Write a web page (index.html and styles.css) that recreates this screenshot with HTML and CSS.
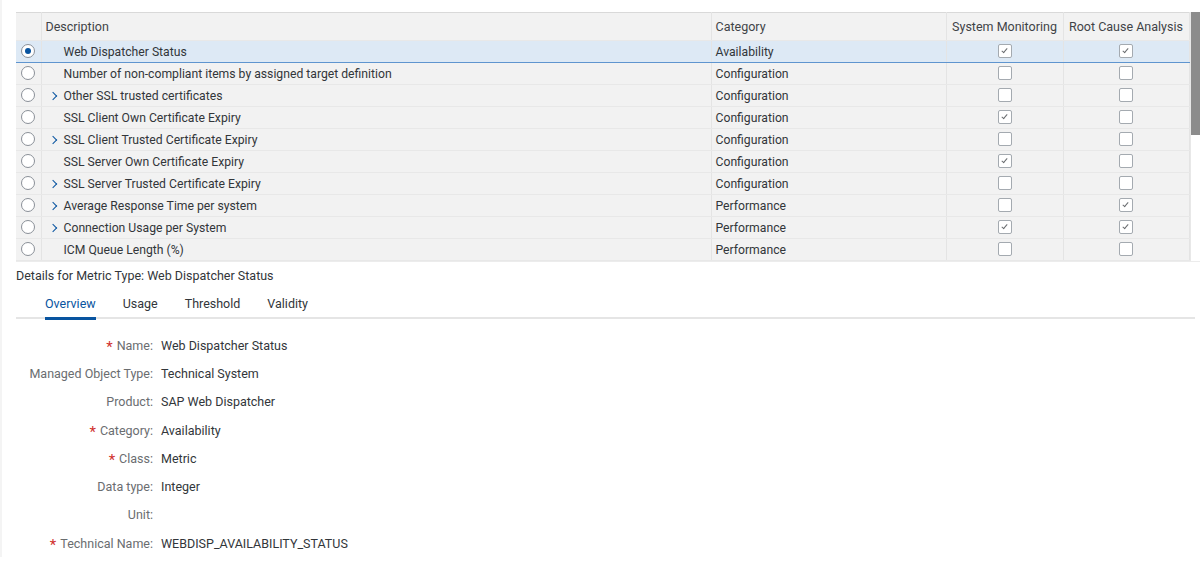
FILE: index.html
```html
<!DOCTYPE html>
<html lang="en">
<head>
  <meta charset="UTF-8">
  <title>Metric Types</title>
  <link rel="stylesheet" href="styles.css">
</head>
<body>
  <div class="grid-wrap">
    <table class="metrics">
      <colgroup>
        <col class="c-sel"><col class="c-desc"><col class="c-cat"><col class="c-sm"><col class="c-rca">
      </colgroup>
      <thead>
        <tr>
          <th></th>
          <th>Description</th>
          <th>Category</th>
          <th class="center">System Monitoring</th>
          <th class="center">Root Cause Analysis</th>
        </tr>
      </thead>
      <tbody>
        <tr class="selected">
          <td><span class="radio on"></span></td>
          <td class="desc">Web Dispatcher Status</td>
          <td>Availability</td>
          <td class="center"><span class="check on"></span></td>
          <td class="center"><span class="check on"></span></td>
        </tr>
        <tr>
          <td><span class="radio"></span></td>
          <td class="desc">Number of non-compliant items by assigned target definition</td>
          <td>Configuration</td>
          <td class="center"><span class="check"></span></td>
          <td class="center"><span class="check"></span></td>
        </tr>
        <tr>
          <td><span class="radio"></span></td>
          <td class="desc"><span class="expander"></span>Other SSL trusted certificates</td>
          <td>Configuration</td>
          <td class="center"><span class="check"></span></td>
          <td class="center"><span class="check"></span></td>
        </tr>
        <tr>
          <td><span class="radio"></span></td>
          <td class="desc">SSL Client Own Certificate Expiry</td>
          <td>Configuration</td>
          <td class="center"><span class="check on"></span></td>
          <td class="center"><span class="check"></span></td>
        </tr>
        <tr>
          <td><span class="radio"></span></td>
          <td class="desc"><span class="expander"></span>SSL Client Trusted Certificate Expiry</td>
          <td>Configuration</td>
          <td class="center"><span class="check"></span></td>
          <td class="center"><span class="check"></span></td>
        </tr>
        <tr>
          <td><span class="radio"></span></td>
          <td class="desc">SSL Server Own Certificate Expiry</td>
          <td>Configuration</td>
          <td class="center"><span class="check on"></span></td>
          <td class="center"><span class="check"></span></td>
        </tr>
        <tr>
          <td><span class="radio"></span></td>
          <td class="desc"><span class="expander"></span>SSL Server Trusted Certificate Expiry</td>
          <td>Configuration</td>
          <td class="center"><span class="check"></span></td>
          <td class="center"><span class="check"></span></td>
        </tr>
        <tr>
          <td><span class="radio"></span></td>
          <td class="desc"><span class="expander"></span>Average Response Time per system</td>
          <td>Performance</td>
          <td class="center"><span class="check"></span></td>
          <td class="center"><span class="check on"></span></td>
        </tr>
        <tr>
          <td><span class="radio"></span></td>
          <td class="desc"><span class="expander"></span>Connection Usage per System</td>
          <td>Performance</td>
          <td class="center"><span class="check on"></span></td>
          <td class="center"><span class="check on"></span></td>
        </tr>
        <tr>
          <td><span class="radio"></span></td>
          <td class="desc">ICM Queue Length (%)</td>
          <td>Performance</td>
          <td class="center"><span class="check"></span></td>
          <td class="center"><span class="check"></span></td>
        </tr>
      </tbody>
    </table>
    <div class="scrollbar"><div class="thumb"></div></div>
  </div>

  <div class="details">
    <div class="details-title">Details for Metric Type: Web Dispatcher Status</div>
    <div class="tabs">
      <span class="tab active">Overview</span>
      <span class="tab">Usage</span>
      <span class="tab">Threshold</span>
      <span class="tab">Validity</span>
    </div>
    <div class="form">
      <div class="label req">Name:</div><div class="value">Web Dispatcher Status</div>
      <div class="label">Managed Object Type:</div><div class="value">Technical System</div>
      <div class="label">Product:</div><div class="value">SAP Web Dispatcher</div>
      <div class="label req">Category:</div><div class="value">Availability</div>
      <div class="label req">Class:</div><div class="value">Metric</div>
      <div class="label">Data type:</div><div class="value">Integer</div>
      <div class="label">Unit:</div><div class="value"></div>
      <div class="label req">Technical Name:</div><div class="value">WEBDISP_AVAILABILITY_STATUS</div>
    </div>
  </div>
</body>
</html>
```

FILE: styles.css
```css
html {
  box-sizing: border-box;
}

*, *:before, *:after {
  box-sizing: inherit;
}

body {
  margin: 0;
  padding: 12px 0 0 14px;
  font-family: Roboto, "Liberation Sans", sans-serif;
  font-size: 12.5px;
  color: #32363a;
  background: #fff;
  border-left: 2px solid #f4f4f4;
}

.grid-wrap {
  display: flex;
  border-bottom: 1px solid #ececec;
}

.metrics {
  border-collapse: collapse;
  table-layout: fixed;
  width: 1173px;
  background: #f2f2f2;
  border-top: 1px solid #d9d9d9;
}

.c-sel { width: 25px; }
.c-desc { width: 670px; }
.c-cat { width: 235px; }
.c-sm { width: 117px; }
.c-rca { width: 126px; }

.metrics th,
.metrics td {
  padding: 0 4px;
  text-align: left;
  font-weight: normal;
  white-space: nowrap;
  border-right: 1px solid #e4e4e4;
  border-bottom: 1px solid #e8e8e8;
}

.metrics th {
  height: 28px;
  color: #3f4347;
}

.metrics td {
  height: 22px;
  line-height: 20px;
  font-size: 12.2px;
}

.metrics td:first-child {
  padding: 0;
  text-align: center;
}

.metrics .center {
  text-align: center;
}

.metrics td.desc {
  padding-left: 22px;
}

.metrics tr.selected td {
  background: #dde9f5;
  border-bottom: 1px solid #5f95cf;
}

.radio {
  display: inline-block;
  width: 14px;
  height: 14px;
  border: 1px solid #8a9098;
  border-radius: 50%;
  background: #fff;
  vertical-align: middle;
  position: relative;
  top: -1px;
}

.radio.on:after {
  content: "";
  position: absolute;
  left: 3px;
  top: 3px;
  width: 6px;
  height: 6px;
  border-radius: 50%;
  background: #0854a0;
}

.expander {
  display: inline-block;
  width: 6px;
  height: 6px;
  border-right: 1.5px solid #0854a0;
  border-bottom: 1.5px solid #0854a0;
  transform: rotate(-45deg);
  margin: 0 8px 0 -14px;
  position: relative;
  top: -1px;
}

.check {
  display: inline-block;
  width: 14px;
  height: 14px;
  border: 1px solid #a4aab0;
  border-radius: 2px;
  background: #fff;
  vertical-align: middle;
  position: relative;
  top: -1px;
}

.check.on:after {
  content: "";
  position: absolute;
  left: 4px;
  top: 2px;
  width: 3px;
  height: 6px;
  border-right: 1.3px solid #6a6d70;
  border-bottom: 1.3px solid #6a6d70;
  transform: rotate(40deg);
}

.scrollbar {
  width: 11px;
  border-left: 1px solid #e8e8e8;
}

.thumb {
  height: 123px;
  background: #8c8c8c;
}

.details {
  padding-right: 5px;
}

.details-title {
  height: 28px;
  line-height: 28px;
}

.tabs {
  display: flex;
  gap: 27px;
  padding-left: 29px;
  border-bottom: 2px solid #e5e5e5;
  height: 29px;
}

.tab {
  line-height: 28px;
  color: #32363a;
}

.tab.active {
  color: #0854a0;
  border-bottom: 3px solid #0854a0;
  height: 30px;
}

.form {
  display: grid;
  grid-template-columns: 137px 1fr;
  column-gap: 8px;
  grid-auto-rows: 28.3px;
  align-items: center;
  padding-top: 12px;
}

.label {
  text-align: right;
  color: #6a6d70;
}

.label.req:before {
  content: "*";
  color: #d0312d;
  font-size: 15px;
  margin-right: 4px;
  position: relative;
  top: 2px;
}

.value {
  color: #32363a;
}
```
